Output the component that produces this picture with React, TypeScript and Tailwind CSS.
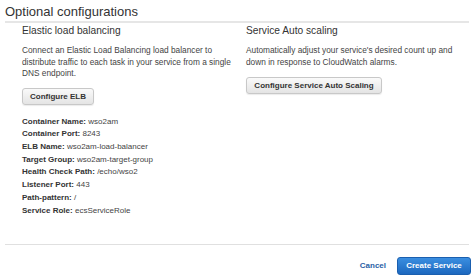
export default function App() {
  const details: [string, string][] = [
    ["Container Name:", "wso2am"],
    ["Container Port:", "8243"],
    ["ELB Name:", "wso2am-load-balancer"],
    ["Target Group:", "wso2am-target-group"],
    ["Health Check Path:", "/echo/wso2"],
    ["Listener Port:", "443"],
    ["Path-pattern:", "/"],
    ["Service Role:", "ecsServiceRole"],
  ];

  return (
    <div
      className="w-[474px] h-[277px] bg-white text-[#444] overflow-hidden"
      style={{ fontFamily: '"Liberation Sans", Arial, sans-serif' }}
    >
      {/* HEADER */}
      <div className="mx-[5px] border-b-2 border-[#e6e6e6] pt-[4px] pb-[1px]">
        <h2 className="text-[13px] leading-[16px] text-[#333]">Optional configurations</h2>
      </div>

      {/* COLUMNS */}
      <div className="grid grid-cols-[224px_1fr] pl-[22px] pt-[2px] h-[221px]">
        <div>
          <h3 className="text-[10.2px] leading-[12px] text-[#333]">Elastic load balancing</h3>
          <p className="mt-[8px] w-[215px] text-[8.3px] leading-[11.7px]">
            Connect an Elastic Load Balancing load balancer to distribute traffic to each task in your service from a single DNS endpoint.
          </p>
          <button className="mt-[8px] h-[17px] w-[72px] rounded-[3px] border border-[#c8c8c8] bg-gradient-to-b from-[#fafafa] to-[#e4e4e4] text-[8px] font-bold text-[#333] shadow-[0_1px_1px_rgba(0,0,0,0.08)]">
            Configure ELB
          </button>
          <div className="mt-[10px] text-[8px] leading-[12.7px]">
            {details.map(([k, v]) => (
              <div key={k}>
                <span className="font-bold text-[#333]">{k}</span> {v}
              </div>
            ))}
          </div>
        </div>

        <div>
          <h3 className="text-[10.2px] leading-[12px] text-[#333]">Service Auto scaling</h3>
          <p className="mt-[8px] w-[222px] text-[8.3px] leading-[11.7px]">
            Automatically adjust your service's desired count up and down in response to CloudWatch alarms.
          </p>
          <button className="mt-[9px] h-[17px] w-[136px] rounded-[3px] border border-[#c8c8c8] bg-gradient-to-b from-[#fafafa] to-[#e4e4e4] text-[8px] font-bold text-[#333] shadow-[0_1px_1px_rgba(0,0,0,0.08)]">
            Configure Service Auto Scaling
          </button>
        </div>
      </div>

      {/* FOOTER */}
      <div className="mx-[5px] border-t border-[#e0e0e0]" />
      <div className="flex items-center justify-end gap-[11px] pr-[3px] pt-[12px]">
        <button className="text-[8px] font-bold text-[#2a5fa5]">Cancel</button>
        <button className="h-[18px] w-[74px] rounded-[3px] bg-gradient-to-b from-[#3a8ee0] to-[#1c68bf] border border-[#1a5faf] text-[8px] font-bold text-white">
          Create Service
        </button>
      </div>
    </div>
  );
}
